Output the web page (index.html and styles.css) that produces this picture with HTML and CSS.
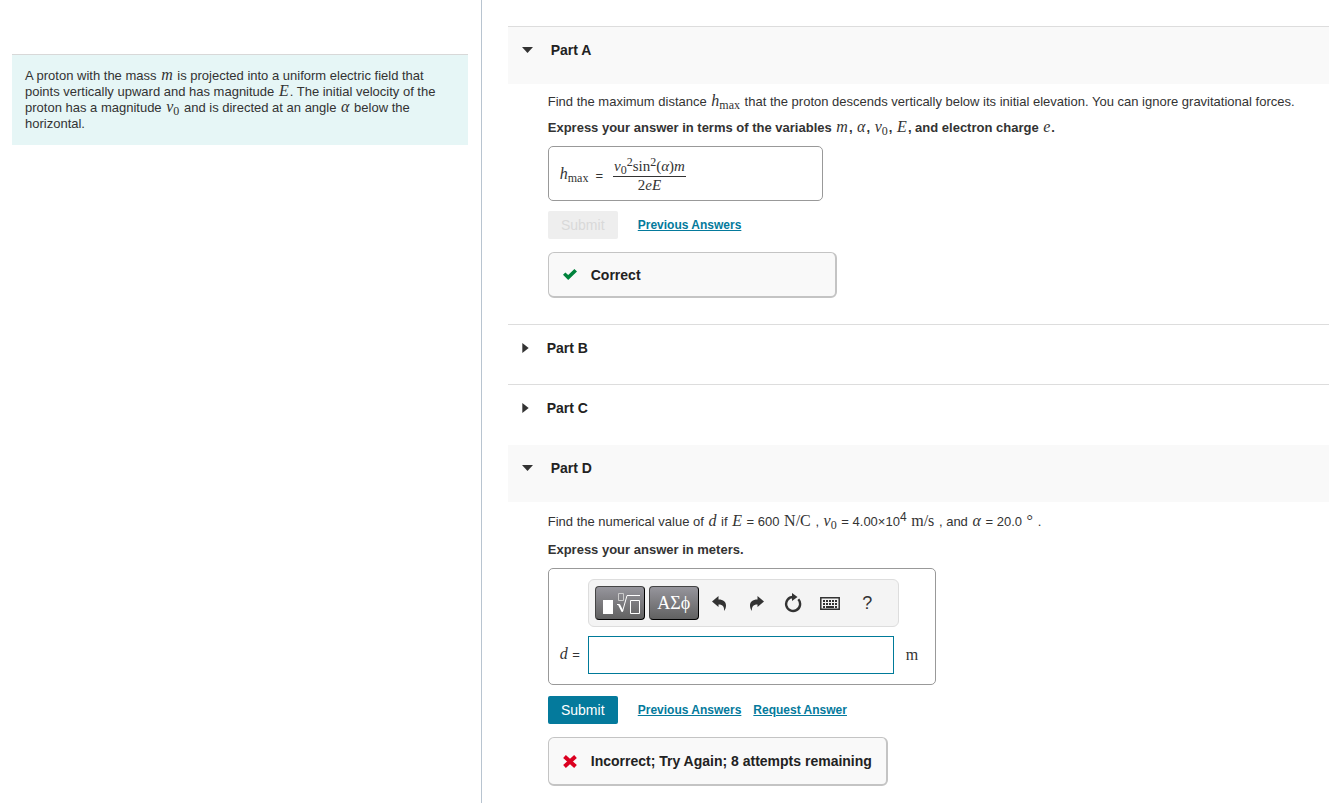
FILE: index.html
```html
<!DOCTYPE html>
<html lang="en">
  <head>
    <meta charset="UTF-8" />
    <meta name="viewport" content="width=device-width, initial-scale=1.0" />
    <title>Proton in an Electric Field</title>
    <link rel="stylesheet" href="styles.css">
  </head>
  <body>
    <div class="page">
      <aside class="sidebar">
        <p class="problem">
          A proton with the mass <i class="math">m</i> is projected into a uniform electric field that points vertically upward and has magnitude <i class="math">E</i>. The initial velocity of the proton has a magnitude <span class="math"><i>v</i><sub>0</sub></span> and is directed at an angle <i class="math">α</i> below the horizontal.
        </p>
      </aside>

      <main class="parts">
        <section class="part">
          <h2 class="part-header open">
            <button class="toggle" aria-expanded="true">
              <svg class="caret-down" viewBox="0 0 11 6"><path d="M0 0h11L5.500 6z" /></svg>
              Part A
            </button>
          </h2>
          <div class="part-body">
            <p class="question">
              Find the maximum distance <span class="math"><i>h</i><sub>max</sub></span> that the proton descends vertically below its initial elevation. You can ignore gravitational forces.
            </p>
            <p class="instructions">
              Express your answer in terms of the variables <i class="math">m</i>, <i class="math">α</i>, <span class="math"><i>v</i><sub>0</sub></span>, <i class="math">E</i>, and electron charge <i class="math">e</i>.
            </p>
            <div class="answer answer-done">
              <span class="math"><i>h</i><sub>max</sub></span>
              <span>=</span>
              <span class="fraction">
                <span class="numerator"><i>v</i><sub>0</sub><sup>2</sup>sin<sup>2</sup>(<i>α</i>)<i>m</i></span>
                <span class="denominator">2<i>eE</i></span>
              </span>
            </div>
            <div class="buttons">
              <button class="submit" disabled>Submit</button>
              <a href="#">Previous Answers</a>
            </div>
            <div class="feedback feedback-correct">
              <svg class="icon-result" viewBox="0 0 14 11"><path fill="#00833c" d="M0 5.800 2.400 3.400 5.200 6.100 11.400 0 14 2.500 5.200 11z" /></svg>
              Correct
            </div>
          </div>
        </section>

        <section class="part">
          <h2 class="part-header">
            <button class="toggle" aria-expanded="false">
              <svg class="caret-right" viewBox="0 0 7 11"><path d="M0 0v11L7 5.500z" /></svg>
              Part B
            </button>
          </h2>
        </section>

        <section class="part">
          <h2 class="part-header">
            <button class="toggle" aria-expanded="false">
              <svg class="caret-right" viewBox="0 0 7 11"><path d="M0 0v11L7 5.500z" /></svg>
              Part C
            </button>
          </h2>
        </section>

        <section class="part">
          <h2 class="part-header open current">
            <button class="toggle" aria-expanded="true">
              <svg class="caret-down" viewBox="0 0 11 6"><path d="M0 0h11L5.500 6z" /></svg>
              Part D
            </button>
          </h2>
          <div class="part-body">
            <p class="question question-units">
              Find the numerical value of <i class="math">d</i> if <i class="math">E</i> = 600 <span class="math">N/C</span> , <span class="math"><i>v</i><sub>0</sub></span> = 4.00×10<sup>4</sup> <span class="math">m/s</span> , and <i class="math">α</i> = 20.0 <span class="math">°</span> .
            </p>
            <p class="instructions">Express your answer in meters.</p>
            <div class="answer answer-entry">
              <div class="toolbar">
                <button class="key" aria-label="Templates">
                  <svg width="40" height="24" viewBox="0 0 40 24" stroke="#fff">
                    <path class="solid" stroke="none" d="M3 9h10v14H3z" />
                    <path stroke="#ccc" d="M18.500 2.500h5v7h-5z" />
                    <path d="M30.500 9.500h9v13h-9z" />
                    <path d="M17 13.500h2l3.500 7 4.500-16h13" />
                    <path stroke-width="2" d="m19 13.500 3.500 7" />
                  </svg>
                </button>
                <button class="key">ΑΣϕ</button>
                <button class="tool" aria-label="Undo">
                  <svg width="15" height="15" viewBox="0 0 15 15"><path d="M0 5.500 6.500 0v3.500c5 0 7.500 2.500 7.500 6 0 2-.7 4-2 5.500.5-4-1-6.500-5.500-6.500V11z" /></svg>
                </button>
                <button class="tool" aria-label="Redo">
                  <svg width="15" height="15" viewBox="0 0 15 15"><path d="M15 5.500 8.500 0v3.500c-5 0-7.500 2.500-7.500 6 0 2 .7 4 2 5.500-.5-4 1-6.500 5.500-6.500V11z" /></svg>
                </button>
                <button class="tool" aria-label="Reset">
                  <svg width="18" height="20" viewBox="0 0 18 20"><path fill="none" stroke="#333" stroke-width="2.400" d="M14.300 6.300A7 7 0 1 1 9 4" /><path d="M8 0l5.500 4L8 8z" /></svg>
                </button>
                <button class="tool" aria-label="Keyboard shortcuts">
                  <svg width="20" height="13" viewBox="0 0 20 13">
                    <path fill="none" stroke="#333" stroke-width="1.500" d="M.8.800h18.400v11.400H.8z" />
                    <path fill="none" stroke="#333" stroke-width="2" stroke-dasharray="2 1" d="M3 4h14M3 7h14" />
                    <path d="M3 9h2v2H3zM6 9h8v2H6zM15 9h2v2h-2z" />
                  </svg>
                </button>
                <button class="tool help" aria-label="Help">?</button>
              </div>
              <label class="entry-label" for="distance"><i class="math">d</i> =</label>
              <input class="entry" id="distance" type="text" />
              <span class="unit math">m</span>
            </div>
            <div class="buttons">
              <button class="submit">Submit</button>
              <a href="#">Previous Answers</a>
              <a href="#">Request Answer</a>
            </div>
            <div class="feedback">
              <svg class="icon-result" viewBox="0 0 14 13"><path fill="none" stroke="#db0020" stroke-width="4" d="M1.500 1.500l11 10M12.500 1.500l-11 10" /></svg>
              Incorrect; Try Again; 8 attempts remaining
            </div>
          </div>
        </section>
      </main>
    </div>
  </body>
</html>
```
FILE: styles.css
```css
* {
  box-sizing: border-box;
}

body {
  margin: 0;
  font-family: "Liberation Sans", Arial, sans-serif;
  font-size: 13px;
  line-height: 16px;
  color: #333;
  background-color: #fff;
}

p,
h2 {
  margin: 0;
}

button {
  font-family: inherit;
  border: none;
  cursor: pointer;
}

svg {
  display: block;
  fill: #333;
}

.page {
  display: grid;
  grid-template-columns: 29fr 51fr;
  min-height: 100vh;
}

.sidebar {
  padding: 54px 13px 0 12px;
  border-right: 1px solid #b8c4d0;
}

.problem {
  padding: 13px 24px 13px 13px;
  border-top: 1px solid #d8d8d8;
  background-color: #e6f6f6;
}

.parts {
  padding: 26px 0 16px 26px;
}

/* math symbols */
.math,
.fraction {
  font-family: "Liberation Serif", "Times New Roman", serif;
  font-size: 16px;
  font-weight: normal;
}

.math {
  padding: 0 1px;
  line-height: 0;
}

sub,
sup {
  font-size: 12px;
  line-height: 0;
}

sub {
  vertical-align: -3px;
}

sup {
  vertical-align: 5px;
}

/* part headers */
.part-header {
  height: 60px;
  padding: 14px;
  border-top: 1px solid #ddd;
}

.part-header.open {
  height: 58px;
  background-color: #f9f9f9;
}

.part-header.current {
  border-top-color: #fff;
}

.toggle {
  display: flex;
  align-items: center;
  gap: 18px;
  padding: 0;
  font-size: 14px;
  font-weight: bold;
  line-height: 18px;
  color: #222;
  background: none;
}

.caret-down {
  width: 11px;
  height: 6px;
}

.caret-right {
  width: 7px;
  height: 10px;
}

.part-body {
  padding: 10px 12px 26px 40px;
}

.question,
.instructions {
  margin-bottom: 10px;
}

.question-units {
  line-height: 20px;
}

.instructions {
  font-weight: bold;
}

/* answer boxes */
.answer {
  border: 1px solid #999;
  border-radius: 5px;
}

.answer-done {
  display: flex;
  align-items: center;
  gap: 6px;
  width: 275px;
  height: 55px;
  padding: 4px 10px 0;
}

.fraction {
  display: inline-flex;
  flex-direction: column;
  align-items: center;
  margin-left: 4px;
  font-size: 15px;
  line-height: 16px;
}

.numerator {
  padding: 0 1px 2px;
  border-bottom: 1px solid #333;
}

.answer-entry {
  display: grid;
  grid-template-columns: 29px 306px 26px;
  row-gap: 9px;
  align-items: center;
  width: 388px;
  padding: 10px;
}

.toolbar {
  grid-column: 2 / 4;
  display: flex;
  align-items: center;
  gap: 4px;
  width: 311px;
  height: 48px;
  padding: 0 6px;
  border: 1px solid #ddd;
  border-radius: 6px;
  background-color: #f4f4f4;
}

.key {
  display: flex;
  align-items: center;
  justify-content: center;
  width: 50px;
  height: 34px;
  padding: 0;
  border: 1px solid #000;
  border-top-color: #444;
  border-left-color: #444;
  border-radius: 4px;
  font-family: "Liberation Serif", "Times New Roman", serif;
  font-size: 18px;
  color: #fff;
  background: linear-gradient(#96959c, #616161);
}

.key svg {
  fill: none;
}

.key .solid {
  fill: #fff;
}

.tool {
  display: flex;
  align-items: center;
  justify-content: center;
  width: 33px;
  height: 34px;
  padding: 0;
  color: #333;
  background: none;
}

.help {
  font-size: 18px;
}

.entry {
  width: 100%;
  height: 38px;
  padding: 0 8px;
  border: 1px solid #007a99;
  font-size: 16px;
}

.unit {
  padding-left: 12px;
}

/* submit row and feedback */
.buttons {
  display: flex;
  align-items: center;
  gap: 12px;
  margin: 10px 0 13px;
}

.answer-entry + .buttons {
  margin-top: 11px;
}

.submit {
  width: 70px;
  height: 28px;
  margin-right: 8px;
  padding: 0;
  border-radius: 2px;
  font-size: 14px;
  color: #fff;
  background-color: #047a9c;
}

.submit:disabled {
  color: #d9d9d9;
  background-color: #eee;
}

a {
  font-size: 12px;
  font-weight: bold;
  color: #047a9c;
}

.feedback {
  display: flex;
  align-items: center;
  gap: 14px;
  width: fit-content;
  height: 49px;
  padding: 0 14px;
  border: 1px solid #c4c4c4;
  border-right-width: 2px;
  border-bottom-width: 2px;
  border-radius: 6px;
  font-size: 14px;
  font-weight: bold;
  color: #222;
  background-color: #f9f9f9;
}

.feedback-correct {
  width: 289px;
  height: 46px;
}

.icon-result {
  width: 14px;
  height: 13px;
}
```
